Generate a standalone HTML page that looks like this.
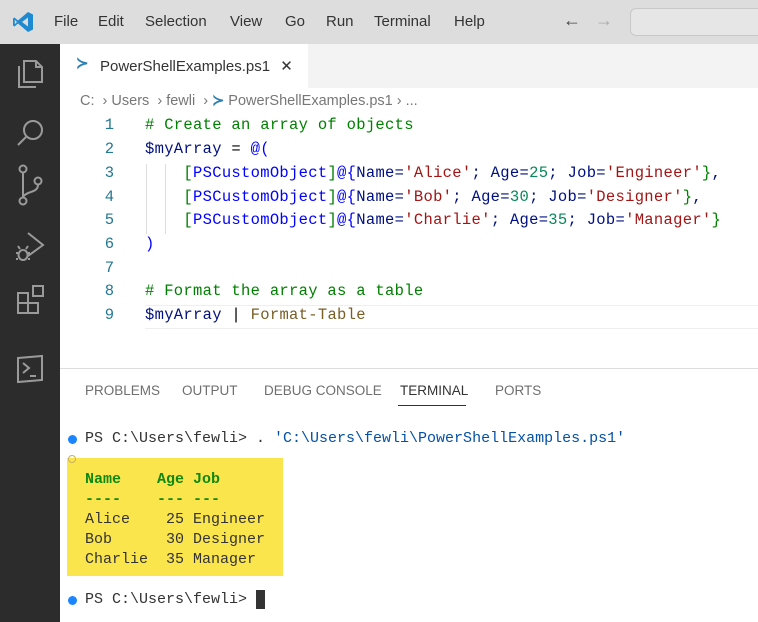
<!DOCTYPE html>
<html><head><meta charset="utf-8"><style>
*{margin:0;padding:0;box-sizing:border-box}
body{width:758px;height:622px;overflow:hidden;background:#fff;font-family:"Segoe UI","Liberation Sans",sans-serif;position:relative}
.title{position:absolute;left:0;top:0;width:758px;height:44px;background:#dddddd}
.menu{position:absolute;top:13px;font-size:15px;color:#333}
.act{position:absolute;left:0;top:44px;width:60px;height:578px;background:#2c2c2c}
.tabbar{position:absolute;left:60px;top:44px;width:698px;height:44px;background:#f3f3f3}
.tab{position:absolute;left:60px;top:44px;width:248px;height:44px;background:#fff;font-size:15px;color:#333;padding:13px 0 0 40px}
.code{position:absolute;left:145px;font-family:"Liberation Mono",monospace;font-size:15.5px;letter-spacing:0.3px;white-space:pre;color:#001080}
.ln{position:absolute;left:90px;width:24px;text-align:right;font-family:"Liberation Mono",monospace;font-size:15.5px;color:#237893}
.c{color:#008000}.b{color:#0000ff}.t{color:#267f99}.s{color:#a31515}.n{color:#098658}.k{color:#000}.f{color:#795e26}
.term{position:absolute;font-family:"Liberation Mono",monospace;font-size:15px;white-space:pre;color:#333}
.ptab{position:absolute;top:383px;font-size:13.5px;color:#6f6f6f}
</style></head><body>
<div class="title"></div>
<svg style="position:absolute;left:12px;top:11px" width="22" height="22" viewBox="0 0 22 22"><path d="M16 1 L21 3.5 V18.5 L16 21 L6 12.5 L2.5 15.5 L1 14.5 V7.5 L2.5 6.5 L6 9.5 Z M16 6.5 L10 11 L16 15.5 Z M2.8 8.8 V13.2 L5 11 Z" fill="#1f8ad2" fill-rule="evenodd"/></svg>
<span class="menu" style="left:54px">File</span>
<span class="menu" style="left:98px">Edit</span>
<span class="menu" style="left:145px">Selection</span>
<span class="menu" style="left:230px">View</span>
<span class="menu" style="left:285px">Go</span>
<span class="menu" style="left:326px">Run</span>
<span class="menu" style="left:374px">Terminal</span>
<span class="menu" style="left:454px">Help</span>
<span style="position:absolute;left:563px;top:10px;font-size:18px;color:#444">&#8592;</span>
<span style="position:absolute;left:595px;top:10px;font-size:18px;color:#aaa">&#8594;</span>
<div style="position:absolute;left:630px;top:8px;width:140px;height:28px;border:1px solid #c8c8c8;border-radius:6px;background:#e6e6e6"></div>
<div class="act"></div>
<svg style="position:absolute;left:14px;top:56px" width="34" height="340" viewBox="0 0 34 340" fill="none" stroke="#9a9a9a" stroke-width="2">
<path d="M10 5 H22 L28 11 V26 H10 Z M22 5 V11 H28 M5 10 V31 H22"/>
<circle cx="19" cy="74" r="9"/><path d="M12 81 L4 89"/>
<circle cx="9" cy="113" r="3.5"/><circle cx="9" cy="145" r="3.5"/><circle cx="24" cy="125" r="3.5"/><path d="M9 117 V141 M24 129 C24 137 12 135 9 141"/>
<path d="M14 177 L29 189 L14 200 M9 194 a4.5 5 0 1 0 0.1 0 M2 197 H4 M14 197 H16 M2 203 H4 M14 203 H16 M6 193 L4 190 M12 193 L14 190"/>
<path d="M4 247 H14 V257 H4 Z M14 247 H24 V257 H14 Z M4 237 H14 V247 H4 Z M19 230 H29 V240 H19 Z"/>
<path d="M4 302 L28 300 V324 L4 326 Z M9 307 L15 312 L9 317 M16 320 H22"/>
</svg>
<div class="tabbar"></div>
<div class="tab"><span style="position:absolute;left:16px;top:10px;color:#2c7fb0;font-weight:bold">&#8827;</span>PowerShellExamples.ps1 <span style="margin-left:6px">&#x2715;</span></div>
<div style="position:absolute;left:80px;top:93px;font-size:14.5px;color:#777">C: &nbsp;&#8250; Users &nbsp;&#8250; fewli &nbsp;&#8250; <span style="color:#2c7fb0;font-weight:bold">&#8827;</span> PowerShellExamples.ps1 &#8250; ...</div>
<div style="position:absolute;left:146px;top:164px;width:1px;height:70px;background:#ddd"></div>
<div style="position:absolute;left:165px;top:164px;width:1px;height:70px;background:#ddd"></div>
<div style="position:absolute;left:145px;top:305px;width:613px;height:24px;border-top:1px solid #eee;border-bottom:1px solid #eee"></div>
<div class="ln" style="top:116px">1</div><div class="code" style="top:116px"><span class="c"># Create an array of objects</span></div>
<div class="ln" style="top:140px">2</div><div class="code" style="top:140px">$myArray <span class="k">=</span> <span class="b">@(</span></div>
<div class="ln" style="top:164px">3</div><div class="code" style="top:164px">    <span class="c">[</span><span class="b">PSCustomObject</span><span class="c">]</span><span class="b">@{</span>Name=<span class="s">'Alice'</span>; Age=<span class="n">25</span>; Job=<span class="s">'Engineer'</span><span class="c">}</span>,</div>
<div class="ln" style="top:188px">4</div><div class="code" style="top:188px">    <span class="c">[</span><span class="b">PSCustomObject</span><span class="c">]</span><span class="b">@{</span>Name=<span class="s">'Bob'</span>; Age=<span class="n">30</span>; Job=<span class="s">'Designer'</span><span class="c">}</span>,</div>
<div class="ln" style="top:211px">5</div><div class="code" style="top:211px">    <span class="c">[</span><span class="b">PSCustomObject</span><span class="c">]</span><span class="b">@{</span>Name=<span class="s">'Charlie'</span>; Age=<span class="n">35</span>; Job=<span class="s">'Manager'</span><span class="c">}</span></div>
<div class="ln" style="top:235px">6</div><div class="code" style="top:235px"><span class="b">)</span></div>
<div class="ln" style="top:259px">7</div>
<div class="ln" style="top:282px">8</div><div class="code" style="top:282px"><span class="c"># Format the array as a table</span></div>
<div class="ln" style="top:306px">9</div><div class="code" style="top:306px">$myArray <span class="k">|</span> <span class="f">Format-Table</span></div>
<div style="position:absolute;left:60px;top:368px;width:698px;height:1px;background:#ddd"></div>
<span class="ptab" style="left:85px">PROBLEMS</span>
<span class="ptab" style="left:182px">OUTPUT</span>
<span class="ptab" style="left:264px">DEBUG CONSOLE</span>
<span class="ptab" style="left:400px;color:#333">TERMINAL</span>
<div style="position:absolute;left:398px;top:405px;width:68px;height:1px;background:#333"></div>
<span class="ptab" style="left:495px">PORTS</span>
<div style="position:absolute;left:68px;top:435px;width:9px;height:9px;border-radius:50%;background:#1a85ff"></div>
<div class="term" style="left:85px;top:430px">PS C:\Users\fewli&gt; . <span style="color:#0451a5">'C:\Users\fewli\PowerShellExamples.ps1'</span></div>
<div style="position:absolute;left:67px;top:458px;width:216px;height:118px;background:#fbe54d"></div>
<div style="position:absolute;left:68px;top:455px;width:8px;height:8px;border-radius:50%;border:1px solid #c8b060"></div>
<div class="term" style="left:85px;top:470px;line-height:20px"><b style="color:#118811">Name    Age Job
----    --- ---</b>
Alice    25 Engineer
Bob      30 Designer
Charlie  35 Manager</div>
<div style="position:absolute;left:68px;top:596px;width:9px;height:9px;border-radius:50%;background:#1a85ff"></div>
<div class="term" style="left:85px;top:591px">PS C:\Users\fewli&gt; </div>
<div style="position:absolute;left:256px;top:590px;width:9px;height:19px;background:#333"></div>
</body></html>
